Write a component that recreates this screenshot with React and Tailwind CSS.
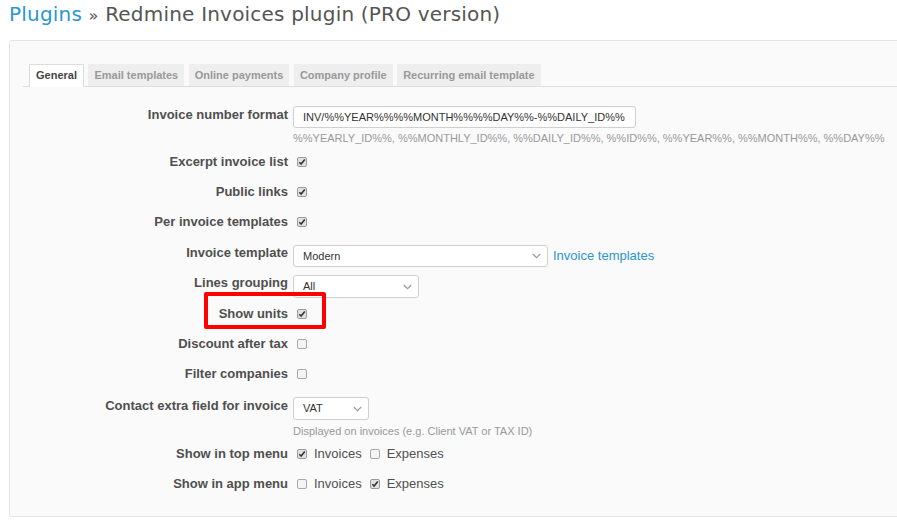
import React from "react";

function Check({ checked }) {
  return (
    <span
      className={
        "inline-flex shrink-0 w-[10px] h-[10px] border rounded-[2px] items-center justify-center " +
        (checked ? "border-[#9a9a9a] bg-[#e2e2e2]" : "border-[#a8a8a8] bg-[#f4f4f4]")
      }
    >
      {checked && (
        <svg width="8" height="8" viewBox="0 0 8 8">
          <path d="M1.3 4.3 L3.1 6.1 L6.8 1.6" fill="none" stroke="#333" strokeWidth="1.6" />
        </svg>
      )}
    </span>
  );
}

function Select({ value, w, h }) {
  return (
    <div
      className={
        "flex items-center justify-between bg-white border border-[#cfcfcf] rounded-[3px] pl-[9px] pr-[6px] text-[11px] text-[#333] " +
        w +
        " " +
        h
      }
    >
      <span>{value}</span>
      <svg width="9" height="6" viewBox="0 0 9 6">
        <path d="M0.8 1 L4.5 4.6 L8.2 1" fill="none" stroke="#9a9a9a" strokeWidth="1.2" />
      </svg>
    </div>
  );
}

const labelCls =
  "w-[278px] shrink-0 text-right font-bold text-[13px] leading-[16px] text-[#4f4f4f] whitespace-nowrap";

function CheckRow({ label, checked }) {
  return (
    <div className="flex items-center h-[30px]">
      <div className={labelCls}>{label}</div>
      <div className="flex items-center ml-[9px]">
        <Check checked={checked} />
      </div>
    </div>
  );
}

function MenuRow({ label, inv, exp }) {
  return (
    <div className="flex items-center h-[30px]">
      <div className={labelCls}>{label}</div>
      <div className="flex items-center ml-[9px] text-[13px] text-[#505050]">
        <Check checked={inv} />
        <span className="ml-[7px]">Invoices</span>
        <span className="ml-[8px] flex">
          <Check checked={exp} />
        </span>
        <span className="ml-[7px]">Expenses</span>
      </div>
    </div>
  );
}

export default function App() {
  const tabs = ["General", "Email templates", "Online payments", "Company profile", "Recurring email template"];
  return (
    <div className="relative w-[897px] h-[524px] overflow-hidden bg-white font-['Liberation_Sans',Arial,sans-serif]">
      <h2 className="h-[26px] pl-[9px] pt-[2px] text-[20px] leading-[24px] tracking-[0.2px] text-[#555] whitespace-nowrap font-['DejaVu_Sans',sans-serif]">
        <span className="text-[#2b96d2]">Plugins</span> <span className="text-[16px] leading-none">»</span> Redmine Invoices plugin (PRO version)
      </h2>

      <div className="mt-[14px] ml-[9px] w-[960px] border border-[#e4e4e4] rounded-[3px] bg-[#fafafa] pb-[17px]">
        <div className="mt-[23px] ml-[13px] h-[23px] border-b border-[#dcdcdc] flex items-end pl-[6px] gap-[4.5px]">
          {tabs.map((t, i) =>
            i === 0 ? (
              <div
                key={t}
                className="h-[23px] -mb-px px-[6px] bg-white border border-b-0 border-[#dcdcdc] flex items-center pb-[1px] text-[11px] font-bold text-[#444]"
              >
                {t}
              </div>
            ) : (
              <div
                key={t}
                className="h-[22px] px-[6px] bg-[#eeeeee] flex items-center text-[11px] font-bold text-[#999]"
              >
                {t}
              </div>
            )
          )}
        </div>

        <div className="mt-[19px]">
          <div className="flex items-start">
            <div className={labelCls + " pt-[1px]"}>Invoice number format</div>
            <div className="ml-[5px]">
              <div className="h-[22px] w-[343px] bg-white border border-[#cfcfcf] rounded-[3px] pl-[9px] flex items-center text-[11px] text-[#333] whitespace-nowrap">
                INV/%%YEAR%%%%MONTH%%%%DAY%%-%%DAILY_ID%%
              </div>
              <div className="mt-[3px] text-[11px] leading-[14px] text-[#999] whitespace-nowrap">
                %%YEARLY_ID%%, %%MONTHLY_ID%%, %%DAILY_ID%%, %%ID%%, %%YEAR%%, %%MONTH%%, %%DAY%%
              </div>
            </div>
          </div>

          <div className="mt-[2px]">
            <CheckRow label="Excerpt invoice list" checked />
            <CheckRow label="Public links" checked />
            <CheckRow label="Per invoice templates" checked />
          </div>

          <div className="flex items-start mt-[7px]">
            <div className={labelCls + " pt-[1px]"}>Invoice template</div>
            <div className="ml-[5px] mt-[1px] flex items-center">
              <Select value="Modern" w="w-[255px]" h="h-[22px]" />
              <span className="ml-[5px] text-[13px] text-[#2b96d2]">Invoice templates</span>
            </div>
          </div>

          <div className="flex items-start mt-[7px]">
            <div className={labelCls + " pt-[1px]"}>Lines grouping</div>
            <div className="ml-[5px] mt-[1px]">
              <Select value="All" w="w-[126px]" h="h-[23px]" />
            </div>
          </div>

          <div className="mt-[1px]">
            <CheckRow label="Show units" checked />
            <CheckRow label="Discount after tax" />
            <CheckRow label="Filter companies" />
          </div>

          <div className="flex items-start mt-[8px]">
            <div className={labelCls + " pt-[1px]"}>Contact extra field for invoice</div>
            <div className="ml-[5px]">
              <Select value="VAT" w="w-[76px]" h="h-[23px]" />
              <div className="mt-[4px] text-[11px] leading-[14px] text-[#999] whitespace-nowrap">
                Displayed on invoices (e.g. Client VAT or TAX ID)
              </div>
            </div>
          </div>

          <div className="mt-[1px]">
            <MenuRow label="Show in top menu" inv />
            <MenuRow label="Show in app menu" exp />
          </div>
        </div>
      </div>

      <div className="absolute left-[204px] top-[292px] w-[122px] h-[37px] border-[4px] border-[#ff0000] rounded-[2px]" />
    </div>
  );
}
